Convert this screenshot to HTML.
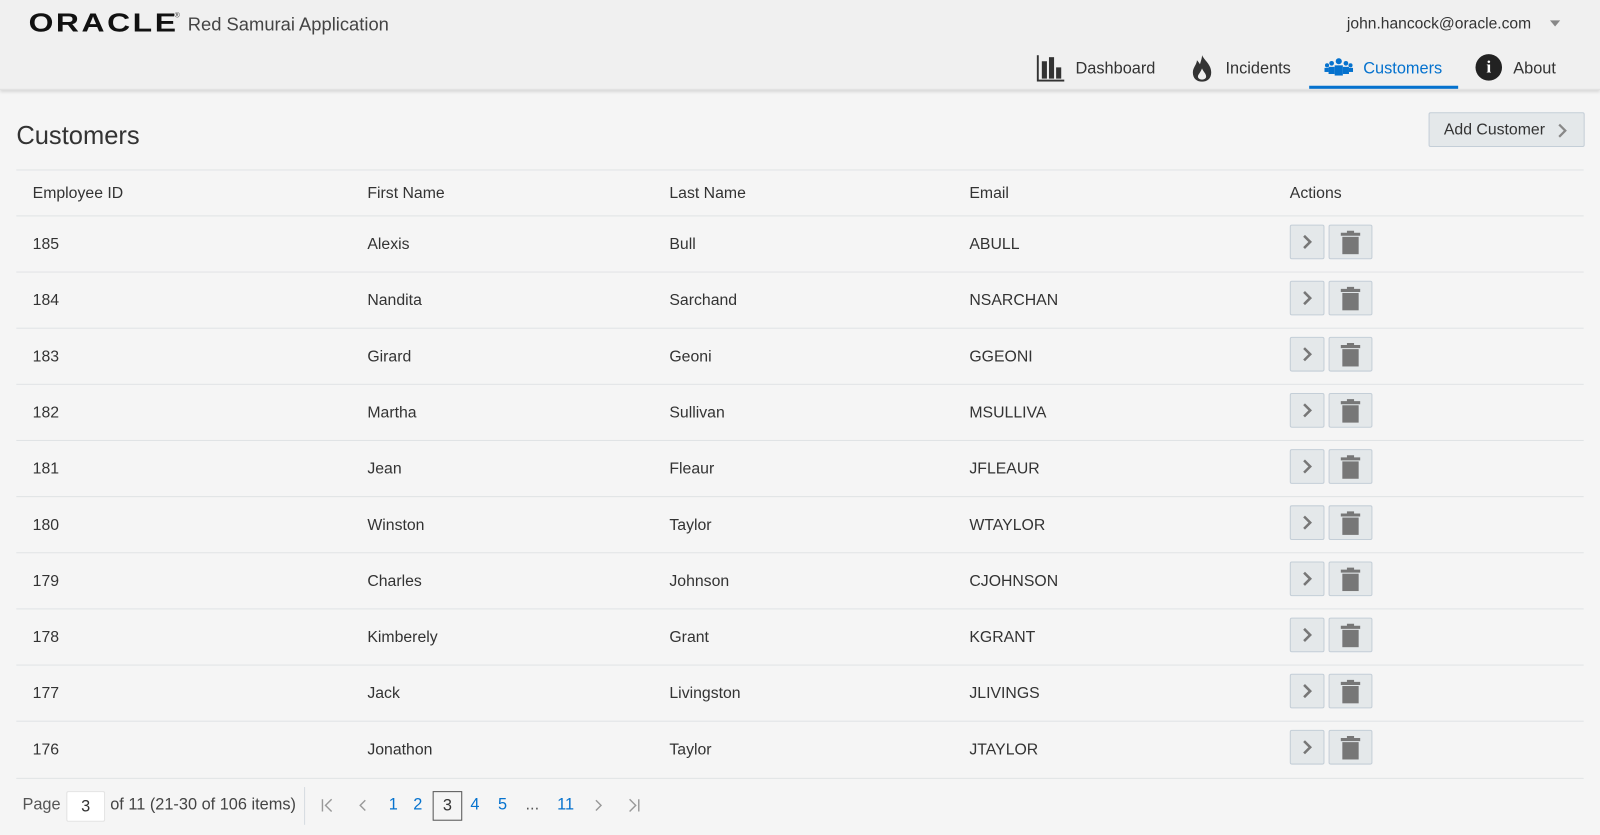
<!DOCTYPE html>
<html><head><meta charset="utf-8"><style>
*{box-sizing:border-box;margin:0;padding:0}
html,body{width:1600px;height:835px;overflow:hidden;background:#f5f5f5}
#w{position:absolute;left:0;top:0;width:1568px;height:818px;transform:scale(1.0204,1.0208);transform-origin:0 0;font-family:"Liberation Sans",Arial,sans-serif;color:#333}
.hdr{position:absolute;left:0;top:0;width:1568px;height:88px;background:#f0f0f0;box-shadow:0 2px 3px rgba(0,0,0,.12);border-bottom:1px solid #e0e0e0}
.abs{position:absolute}
.logo{left:28px;top:9px;font-size:25px;font-weight:bold;letter-spacing:2px;color:#111;transform:scaleX(1.25);transform-origin:left}
.app{left:184px;top:14px;font-size:18px;color:#444}
.user{left:1320px;top:15px;font-size:15.3px;color:#333}
.nav{top:59px;font-size:16px;color:#333}
.uline{left:1283px;top:84px;width:146px;height:3px;background:#0572ce}
h1{position:absolute;left:16px;top:119px;font-size:25px;font-weight:normal;color:#333}
.btn{position:absolute;left:1400px;top:110px;width:153px;height:34px;border:1px solid #c4ced7;border-radius:2px;background:#e4e8ea;font-size:15.5px;color:#333;padding:8px 0 0 14px}
.line{position:absolute;left:16px;width:1536px;height:1px;background:#e0e3e5}
.c{position:absolute;font-size:15.5px;color:#333}
.ab{position:absolute;width:34px;height:34px;border:1px solid #c4ced7;border-radius:2px;background:#e4e8ea}
.ab2{width:43px}
.pg{position:absolute;top:780px;font-size:16px}
.bl{color:#0572ce}
</style></head><body><div id="w">
<div class="hdr"></div>
<div class="abs logo">ORACLE</div>
<div class="abs" style="left:171px;top:12px;font-size:7px">®</div>
<div class="abs app">Red Samurai Application</div>
<div class="abs user">john.hancock@oracle.com</div>
<div class="abs" style="left:1519px;top:20px;width:0;height:0;border-left:5px solid transparent;border-right:5px solid transparent;border-top:6px solid #888"></div>
<svg class="abs" style="left:1016px;top:54px" width="28" height="26" viewBox="0 0 28 26"><path d="M1 0V25H27" stroke="#333" stroke-width="2" fill="none"/><rect x="5" y="6" width="5" height="17" fill="#333"/><rect x="12" y="2" width="5" height="21" fill="#333"/><rect x="19" y="12" width="5" height="11" fill="#333"/></svg>
<div class="abs nav" style="left:1054px">Dashboard</div>
<svg class="abs" style="left:1167px;top:54px" width="22" height="27" viewBox="0 0 22 27"><path d="M11 0C13 5 20 9 20 17C20 23 16 26 11 26C6 26 2 23 2 17C2 12 6 9 6 5C8 7 9 9 9 9C10 5 11 3 11 0Z" fill="#333"/><path d="M11 13C12 16 15 18 15 21C15 23 13 24 11 24C9 24 7 23 7 21C7 19 9 18 11 13Z" fill="#f0f0f0"/></svg>
<div class="abs nav" style="left:1201px">Incidents</div>
<svg class="abs" style="left:1298px;top:57px" width="28" height="18" viewBox="0 0 28 18"><g fill="#0572ce"><circle cx="14" cy="3" r="3"/><circle cx="7" cy="5" r="2.3"/><circle cx="21" cy="5" r="2.3"/><circle cx="2.5" cy="7" r="2"/><circle cx="25.5" cy="7" r="2"/><rect x="10" y="7" width="8" height="10"/><rect x="4" y="8.5" width="6" height="7"/><rect x="18" y="8.5" width="6" height="7"/><rect x="0" y="9.5" width="4" height="4"/><rect x="24" y="9.5" width="4" height="4"/></g></svg>
<div class="abs nav" style="left:1336px;color:#0572ce">Customers</div>
<div class="uline abs"></div>
<div class="abs" style="left:1446px;top:53px;width:26px;height:26px;border-radius:50%;background:#222;color:#fff;font:bold 17px 'Liberation Serif',serif;text-align:center;line-height:26px">i</div>
<div class="abs nav" style="left:1483px">About</div>
<h1>Customers</h1>
<div class="btn">Add Customer <svg style="position:absolute;left:124px;top:9px" width="12" height="16" viewBox="0 0 12 16"><path d="M3 2L9 8L3 14" stroke="#888" stroke-width="2.2" fill="none"/></svg></div>
<div class="line" style="top:166px"></div>
<div class="c" style="left:32px;top:181px">Employee ID</div>
<div class="c" style="left:360px;top:181px">First Name</div>
<div class="c" style="left:656px;top:181px">Last Name</div>
<div class="c" style="left:950px;top:181px">Email</div>
<div class="c" style="left:1264px;top:181px">Actions</div>
<div id="rows"></div>
<div class="pg" style="left:22px;color:#555">Page</div>
<div class="abs" style="left:65px;top:775px;width:38px;height:30px;background:#fff;border:1px solid #e3e3e3;border-radius:2px;text-align:center;font-size:16px;line-height:30px">3</div>
<div class="pg" style="left:108px;color:#444">of 11 (21-30 of 106 items)</div>
<div class="abs" style="left:298px;top:771px;width:1px;height:37px;background:#d5dbe0"></div>
<svg class="abs" style="left:314px;top:782px" width="14" height="14" viewBox="0 0 14 14"><path d="M2 1V13M11 1L5 7L11 13" stroke="#999" stroke-width="1.4" fill="none"/></svg>
<svg class="abs" style="left:350px;top:782px" width="12" height="14" viewBox="0 0 12 14"><path d="M8 2L3 7L8 12" stroke="#999" stroke-width="1.4" fill="none"/></svg>
<div class="pg bl" style="left:381px">1</div>
<div class="pg bl" style="left:405px">2</div>
<div class="abs" style="left:424px;top:775px;width:29px;height:29px;border:1px solid #555;text-align:center;font-size:16px;line-height:27px">3</div>
<div class="pg bl" style="left:461px">4</div>
<div class="pg bl" style="left:488px">5</div>
<div class="pg" style="left:515px;color:#555">...</div>
<div class="pg bl" style="left:546px">11</div>
<svg class="abs" style="left:580px;top:782px" width="12" height="14" viewBox="0 0 12 14"><path d="M4 2L9 7L4 12" stroke="#999" stroke-width="1.4" fill="none"/></svg>
<svg class="abs" style="left:614px;top:782px" width="14" height="14" viewBox="0 0 14 14"><path d="M12 1V13M3 1L9 7L3 13" stroke="#999" stroke-width="1.4" fill="none"/></svg>
</div>
<script>
var d=[["185","Alexis","Bull","ABULL"],["184","Nandita","Sarchand","NSARCHAN"],["183","Girard","Geoni","GGEONI"],["182","Martha","Sullivan","MSULLIVA"],["181","Jean","Fleaur","JFLEAUR"],["180","Winston","Taylor","WTAYLOR"],["179","Charles","Johnson","CJOHNSON"],["178","Kimberely","Grant","KGRANT"],["177","Jack","Livingston","JLIVINGS"],["176","Jonathon","Taylor","JTAYLOR"]];
var h="";var xs=[32,360,656,950];
d.forEach(function(r,i){var y=211+i*55;h+='<div class="line" style="top:'+y+'px"></div>';
for(var j=0;j<4;j++)h+='<div class="c" style="left:'+xs[j]+'px;top:'+(y+20)+'px">'+r[j]+'</div>';
h+='<div class="ab" style="left:1264px;top:'+(y+9)+'px"><svg width="32" height="32" viewBox="0 0 32 32"><path d="M13 10L19 16L13 22" stroke="#777" stroke-width="2.5" fill="none"/></svg></div>';
h+='<div class="ab ab2" style="left:1302px;top:'+(y+9)+'px"><svg width="41" height="32" viewBox="0 0 41 32"><path d="M17 5H24V7H30V10H11V7H17Z" fill="#777"/><rect x="12.5" y="11" width="16" height="17" fill="#777"/></svg></div>';});
h+='<div class="line" style="top:762px"></div>';
document.getElementById("rows").innerHTML=h;
</script>
</body></html>
